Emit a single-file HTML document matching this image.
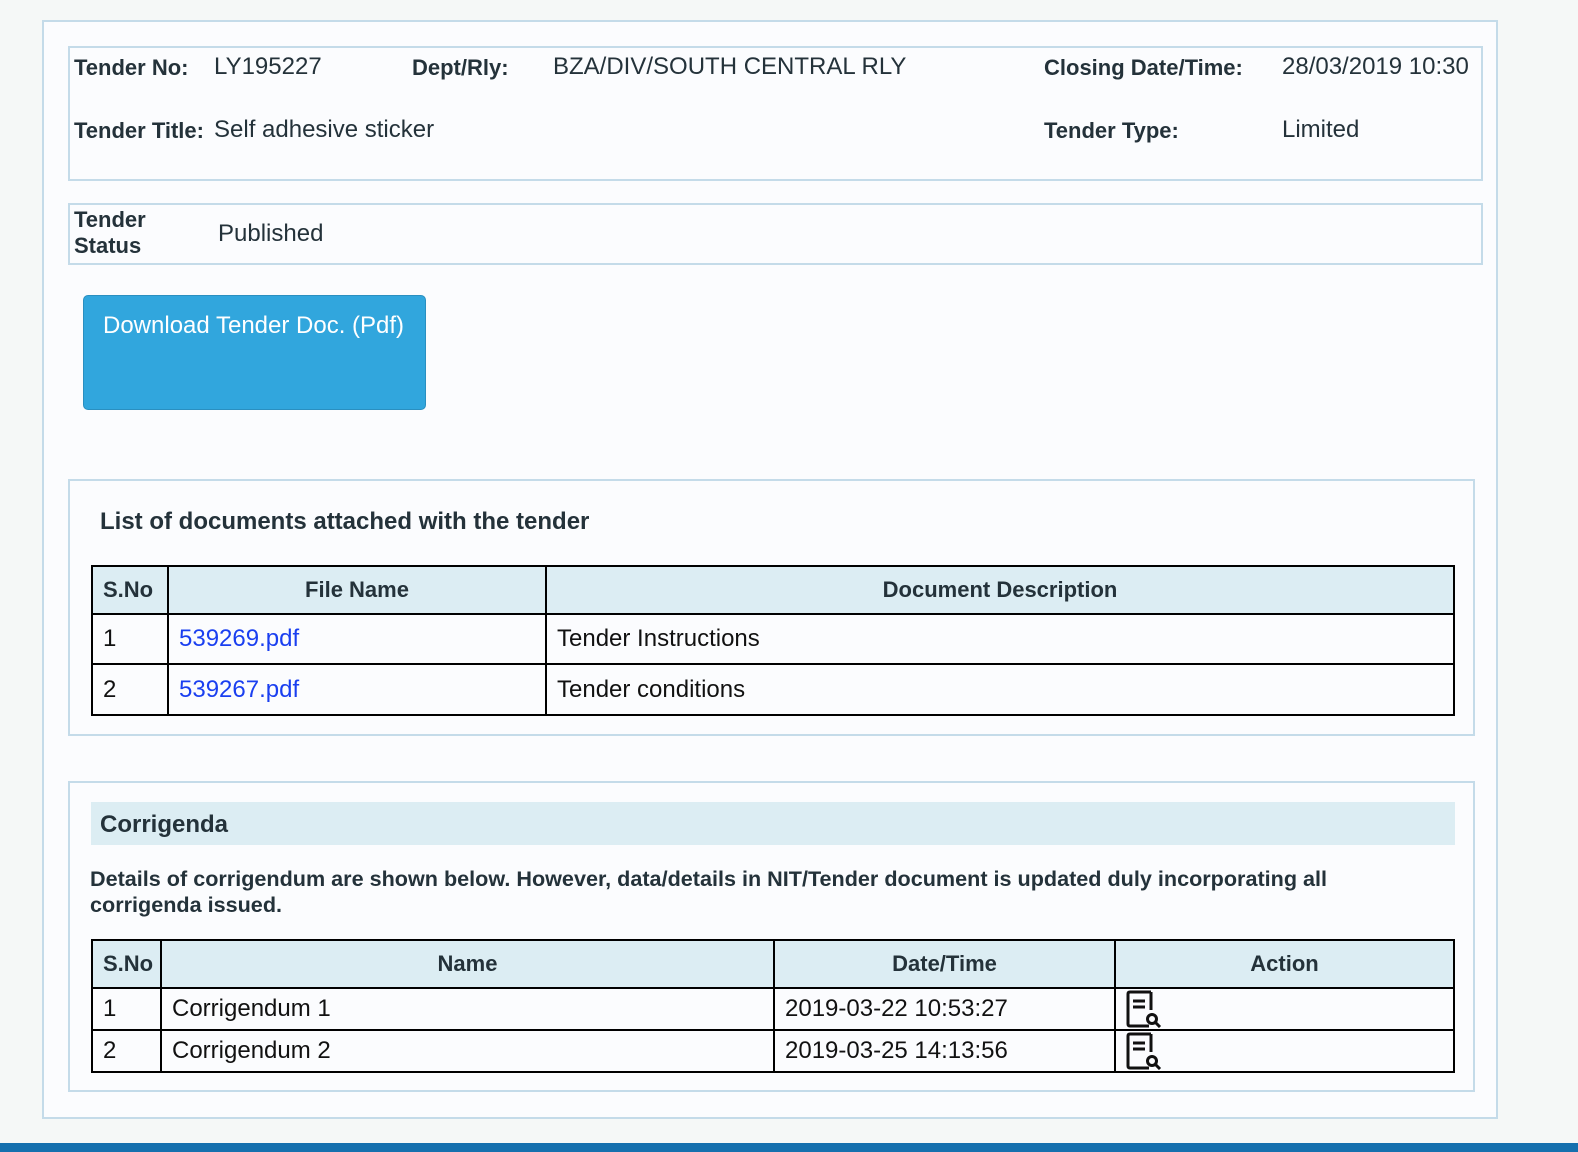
<!DOCTYPE html>
<html><head><meta charset="utf-8"><style>
*{margin:0;padding:0;box-sizing:border-box}
body{width:1578px;height:1152px;background:#f5f8f7;font-family:"Liberation Sans",Arial,sans-serif;color:#24323a;position:relative;overflow:hidden;font-size:24px}
.a{position:absolute;white-space:nowrap}
.box{position:absolute;border:2px solid #c4dbe9;background:#fbfcfe}
.b{font-weight:bold;font-size:22px}
table{position:absolute;border-collapse:collapse;background:#fbfcfe;table-layout:fixed}
td,th{border:2px solid #000;font-size:24px;padding:0 10px;text-align:left;color:#111;white-space:nowrap}
th{background:#dcedf3;text-align:center;color:#24323a;font-size:22px}
th.l{text-align:left;padding-left:10px}
a{color:#1a3ff0;text-decoration:none}
svg{display:block}
</style></head><body>
<div class="box" style="left:42px;top:20px;width:1456px;height:1099px"></div>
<div class="box" style="left:68px;top:46px;width:1415px;height:135px"></div>
<div class="a b" style="left:74px;top:55px">Tender No:</div>
<div class="a" style="left:214px;top:53px">LY195227</div>
<div class="a b" style="left:412px;top:55px">Dept/Rly:</div>
<div class="a" style="left:553px;top:53px">BZA/DIV/SOUTH CENTRAL RLY</div>
<div class="a b" style="left:1044px;top:55px">Closing Date/Time:</div>
<div class="a" style="left:1282px;top:53px">28/03/2019 10:30</div>
<div class="a b" style="left:74px;top:118px">Tender Title:</div>
<div class="a" style="left:214px;top:116px">Self adhesive sticker</div>
<div class="a b" style="left:1044px;top:118px">Tender Type:</div>
<div class="a" style="left:1282px;top:116px">Limited</div>
<div class="box" style="left:68px;top:203px;width:1415px;height:62px"></div>
<div class="a b" style="left:74px;top:207px;line-height:26px">Tender<br>Status</div>
<div class="a" style="left:218px;top:220px">Published</div>
<div class="a" style="left:83px;top:295px;width:343px;height:115px;background:#31a6dd;border:1px solid #2a8fc0;border-radius:5px;color:#fff;padding:16px 0 0 19px">Download Tender Doc. (Pdf)</div>
<div class="box" style="left:68px;top:479px;width:1407px;height:257px"></div>
<div class="a" style="left:100px;top:508px;font-weight:bold">List of documents attached with the tender</div>
<table style="left:91px;top:565px;width:1364px">
<colgroup><col style="width:76px"><col style="width:378px"><col></colgroup>
<tr style="height:48px"><th class="l">S.No</th><th>File Name</th><th>Document Description</th></tr>
<tr style="height:50px"><td>1</td><td><a>539269.pdf</a></td><td>Tender Instructions</td></tr>
<tr style="height:51px"><td>2</td><td><a>539267.pdf</a></td><td>Tender conditions</td></tr>
</table>
<div class="box" style="left:68px;top:781px;width:1407px;height:311px"></div>
<div class="a" style="left:91px;top:802px;width:1364px;height:43px;background:#dcedf3;padding:9px 0 0 9px;font-weight:bold">Corrigenda</div>
<div class="a" style="left:90px;top:866px;width:1360px;line-height:26px;white-space:normal;font-weight:bold;font-size:21.6px">Details of corrigendum are shown below. However, data/details in NIT/Tender document is updated duly incorporating all<br>corrigenda issued.</div>
<table style="left:91px;top:939px;width:1364px">
<colgroup><col style="width:69px"><col style="width:613px"><col style="width:341px"><col></colgroup>
<tr style="height:48px"><th class="l">S.No</th><th>Name</th><th>Date/Time</th><th>Action</th></tr>
<tr style="height:42px"><td>1</td><td>Corrigendum 1</td><td>2019-03-22 10:53:27</td><td style="padding:0 0 0 10px;line-height:0"><svg width="40" height="38" viewBox="0 0 40 38"><path d="M25 2V20M23 36H4Q2 36 2 34V4Q2 2 4 2H25" fill="none" stroke="#111" stroke-width="3"/><path d="M7 11H19M7 17H19" stroke="#111" stroke-width="3"/><circle cx="26" cy="29" r="4.5" fill="none" stroke="#111" stroke-width="3"/><path d="M29 32L34 37" stroke="#111" stroke-width="3"/></svg></td></tr>
<tr style="height:42px"><td>2</td><td>Corrigendum 2</td><td>2019-03-25 14:13:56</td><td style="padding:0 0 0 10px;line-height:0"><svg width="40" height="38" viewBox="0 0 40 38"><path d="M25 2V20M23 36H4Q2 36 2 34V4Q2 2 4 2H25" fill="none" stroke="#111" stroke-width="3"/><path d="M7 11H19M7 17H19" stroke="#111" stroke-width="3"/><circle cx="26" cy="29" r="4.5" fill="none" stroke="#111" stroke-width="3"/><path d="M29 32L34 37" stroke="#111" stroke-width="3"/></svg></td></tr>
</table>
<div class="a" style="left:0;top:1143px;width:1578px;height:9px;background:#1570ae"></div>
</body></html>
